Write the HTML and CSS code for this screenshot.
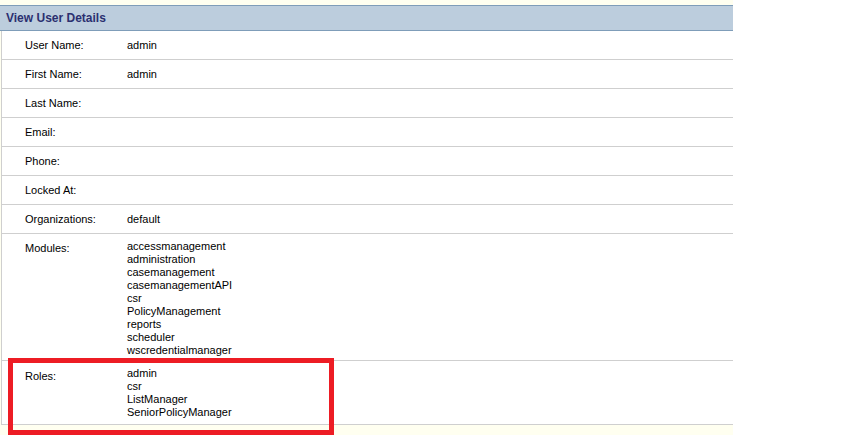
FILE: index.html
```html
<!DOCTYPE html>
<html lang="en">
<head>
    <meta charset="UTF-8">
    <title>View User Details</title>
    <link rel="stylesheet" href="styles.css">
</head>
<body>
    <div class="page">
        <div class="panel">
            <div class="panel-header">View User Details</div>
            <div class="details">
                <div class="row"><div class="label">User Name:</div><div class="value">admin</div></div>
                <div class="row"><div class="label">First Name:</div><div class="value">admin</div></div>
                <div class="row"><div class="label">Last Name:</div><div class="value"></div></div>
                <div class="row"><div class="label">Email:</div><div class="value"></div></div>
                <div class="row"><div class="label">Phone:</div><div class="value"></div></div>
                <div class="row"><div class="label">Locked At:</div><div class="value"></div></div>
                <div class="row"><div class="label">Organizations:</div><div class="value">default</div></div>
                <div class="row">
                    <div class="label">Modules:</div>
                    <div class="value list">
                        accessmanagement<br>
                        administration<br>
                        casemanagement<br>
                        casemanagementAPI<br>
                        csr<br>
                        PolicyManagement<br>
                        reports<br>
                        scheduler<br>
                        wscredentialmanager
                    </div>
                </div>
                <div class="row highlight">
                    <div class="label">Roles:</div>
                    <div class="value list">
                        admin<br>
                        csr<br>
                        ListManager<br>
                        SeniorPolicyManager
                    </div>
                </div>
            </div>
        </div>
    </div>
</body>
</html>
```

FILE: styles.css
```css
body {
    margin: 0;
    background-color: #fff;
    font-family: "Liberation Sans", Arial, sans-serif;
    font-size: 11px;
    color: #000;
}

.page {
    width: 733px;
    height: 435px;
    background-color: #fffff0;
    padding-top: 5px;
    box-sizing: border-box;
}

.panel-header {
    background-color: #bccddd;
    border-top: 1px solid #7f9db9;
    border-bottom: 1px solid #7f9db9;
    height: 24px;
    line-height: 24px;
    padding-left: 6px;
    font-size: 12px;
    font-weight: bold;
    color: #2b3070;
}

.details {
    margin-left: 1px;
    border-left: 1px solid #cfcfcf;
    background-color: #fff;
}

.row {
    display: flex;
    border-bottom: 1px solid #cfcfcf;
    line-height: 13px;
}

.label {
    width: 102px;
    padding: 8px 0 7px 23px;
}

.label.list-label {
    padding-top: 9px;
}

.value {
    padding: 8px 0 7px;
}

.value.list {
    padding: 6px 0 3px;
}

/* red annotation box round the roles row */
.highlight {
    position: relative;
}

.highlight .label {
    padding-top: 9px;
}

.highlight .value.list {
    padding: 6px 0 5px;
}

.highlight::after {
    content: "";
    position: absolute;
    left: 6px;
    top: -3px;
    width: 316px;
    height: 67px;
    border: 5px solid #ed1c24;
}
```
